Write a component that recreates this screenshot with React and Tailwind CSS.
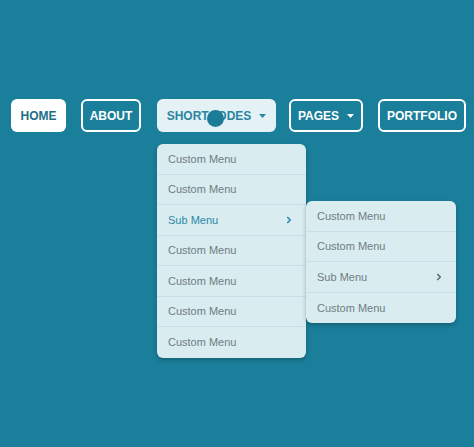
import { ChevronRight } from "lucide-react";

const items = ["Custom Menu", "Custom Menu", "Sub Menu", "Custom Menu", "Custom Menu", "Custom Menu", "Custom Menu"];
const subItems = ["Custom Menu", "Custom Menu", "Sub Menu", "Custom Menu"];

function Caret() {
  return (
    <svg width="7" height="4" viewBox="0 0 7 4" className="ml-2 mt-px">
      <path d="M0 0h7L3.5 4z" fill="currentColor" />
    </svg>
  );
}

function MenuItem({ label, sub, active, last }) {
  return (
    <div
      className={`flex h-[30.5px] items-center justify-between pl-[11px] pr-[12px] text-[11px] ${
        last ? "" : "border-b border-[#c9dfe5]"
      } ${active ? "text-[#2a88a4]" : "text-[#6f7d82]"}`}
    >
      <span>{label}</span>
      {sub && <ChevronRight size={10} strokeWidth={4} className={active ? "text-[#2a88a4]" : "text-[#5d6b70]"} />}
    </div>
  );
}

export default function App() {
  return (
    <div
      className="h-[447px] w-[474px] bg-[#1a7f9a] pt-[99px]"
      style={{ fontFamily: '"Liberation Sans", Arial, sans-serif' }}
    >
      <nav className="flex items-center pl-[11px] text-[12px] font-bold">
        <a className="flex h-[33px] w-[55px] items-center justify-center rounded-[6px] bg-white text-[#1c6f87]">HOME</a>
        <a className="ml-[15px] flex h-[33px] w-[60px] items-center justify-center rounded-[6px] border-2 border-white text-white">ABOUT</a>
        <div className="relative ml-[16px]">
          <a className="flex h-[33px] w-[119px] items-center justify-center rounded-[6px] bg-[#e4f2f5] text-[#2a86a1]">
            SHORTCODES
            <Caret />
          </a>
          <span className="absolute left-[50px] top-[11px] h-[17px] w-[17px] rounded-full bg-[#1b7c97]" />
          <div className="absolute left-0 top-[45px] w-[149px] rounded-[6px] bg-[#d9ecf0] font-normal shadow-[0_2px_4px_rgba(0,0,0,0.25)]">
            {items.map((label, i) => (
              <MenuItem key={i} label={label} sub={i === 2} active={i === 2} last={i === items.length - 1} />
            ))}
            <div className="absolute left-[149px] top-[57px] w-[150px] rounded-[6px] bg-[#d9ecf0] shadow-[0_2px_4px_rgba(0,0,0,0.25)]">
              {subItems.map((label, i) => (
                <MenuItem key={i} label={label} sub={i === 2} last={i === subItems.length - 1} />
              ))}
            </div>
          </div>
        </div>
        <a className="ml-[13px] flex h-[33px] w-[74px] items-center justify-center rounded-[6px] border-2 border-white text-white">
          PAGES
          <Caret />
        </a>
        <a className="ml-[15px] flex h-[33px] w-[88px] items-center justify-center rounded-[6px] border-2 border-white text-white">PORTFOLIO</a>
      </nav>
    </div>
  );
}
